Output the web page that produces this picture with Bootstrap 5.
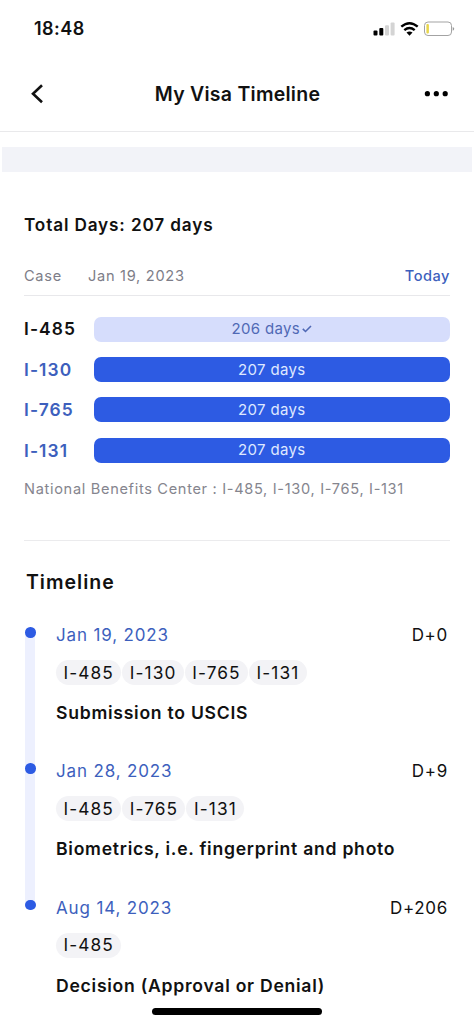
<!DOCTYPE html>
<html lang="en">
<head>
<meta charset="utf-8">
<meta name="viewport" content="width=device-width, initial-scale=1">
<title>My Visa Timeline</title>
<link href="https://cdn.jsdelivr.net/npm/bootstrap@5.3.0/dist/css/bootstrap.min.css" rel="stylesheet">
<style>
body{font-family:Inter,"Liberation Sans",sans-serif;color:#111;background:#fff;font-size:17px}
.screen{width:474px;height:1025px;overflow:hidden}
.status{height:57px;padding:0 19px 0 34px}
.clock{font-size:18px;font-weight:600;letter-spacing:.45px}
.topbar{height:75px;padding:0 25px 0 30px;border-bottom:1px solid #e9e9eb}
.heading{font-size:19.5px;font-weight:600;letter-spacing:.25px;padding:1px 0 0 7px}
.band{height:25px;margin:15px 2px 0;background:#f2f3f8}
.summary{margin:0 24px;border-bottom:1px solid #ebebed;height:369px;padding-top:40px}
.total{font-size:17.2px;font-weight:600;letter-spacing:.85px;line-height:26px}
.legend{height:45px;padding-top:12px;border-bottom:1px solid #e8e8eb;margin-top:13px;font-size:14.6px;line-height:26px;letter-spacing:.7px;color:#7d7d88}
.legend-case{width:64px}
.blue{color:#3d5fbd}
.today{letter-spacing:.5px}
.bars{margin-top:20.5px;gap:15.4px}
.case-row{height:25px}
.case-id{width:69.5px;font-size:17.4px;font-weight:600;letter-spacing:1.1px;padding-top:1px}
.bar{border-radius:7px;background:#2d5be3;color:#dfe8ff;font-size:15px;letter-spacing:.35px;padding-top:1px}
.bar-done{background:#d6ddfc;color:#5069b5}
.check{margin-left:2px}
.note{font-size:14.6px;letter-spacing:.67px;color:#85858e;line-height:24px;margin-top:14px}
.section-title{font-size:19.5px;font-weight:600;letter-spacing:1px;line-height:28px;margin:27px 26px 0}
.events{margin:26px 26px 0 25px}
.event{height:136.4px}
.rail{width:31px}
.rail::after{content:"";position:absolute;left:0;top:10px;width:10px;height:100%;background:#edf0fe}
.event:last-child .rail::after{display:none}
.dot{position:absolute;z-index:1;left:0;top:5px;width:10.5px;height:10.5px;border-radius:50%;background:#2d5be3}
.when{line-height:26px;letter-spacing:.85px}
.elapsed{letter-spacing:.7px}
.chips{margin-top:12px;gap:1px}
.chip{height:25px;border-radius:13px;background:#f3f3f6;padding:0 7.3px 0 7.5px;font-size:17.3px;letter-spacing:1.1px}
.what{font-size:17.6px;font-weight:600;letter-spacing:.73px;line-height:26px;margin-top:15px}
.home{position:absolute;left:152px;top:1008px;width:170px;height:7px;border-radius:4px;background:#000}
</style>
</head>
<body>
<main class="screen position-relative">
  <div class="status d-flex align-items-center justify-content-between">
    <span class="clock">18:48</span>
    <svg width="82" height="20" viewBox="0 0 82 20">
      <rect x="0.5" y="11.500" width="4" height="5" rx="1"/><rect x="6.300" y="9" width="4" height="7.500" rx="1"/>
      <rect x="12" y="6.300" width="4" height="10.200" rx="1" fill="#d4d4d4"/><rect x="17.600" y="3.500" width="4" height="13" rx="1" fill="#d4d4d4"/>
      <g fill="none" stroke="#000" stroke-width="2.400"><path d="M28.300 7.700q8.200-7 16.400 0"/><path d="M31.300 11.200q5.200-4.300 10.400 0"/></g>
      <path d="M33.500 13.600q3-2.400 6 0L36.500 16.700z"/>
      <rect x="51.500" y="3" width="27" height="13.500" rx="3.500" fill="#fff" stroke="#a3a3a3"/>
      <rect x="53.400" y="5" width="2.500" height="9.500" rx="1" fill="#e8d64c"/><path d="M79.700 8v3.700q1.500-.5 1.500-1.850T79.700 8" fill="#999"/>
    </svg>
  </div>
  <header class="topbar d-flex align-items-center justify-content-between">
    <svg width="14" height="20" viewBox="0 0 14 20" fill="none" stroke="#111" stroke-width="2.600"><path d="M12 1.300 3 9.800l9 8.500"/></svg>
    <h1 class="heading m-0">My Visa Timeline</h1>
    <svg width="25" height="8" viewBox="0 0 25 8"><circle cx="3.400" cy="3.700" r="2.600"/><circle cx="12.300" cy="3.700" r="2.600"/><circle cx="21.200" cy="3.700" r="2.600"/></svg>
  </header>
  <div class="band"></div>
  <section class="summary">
    <h2 class="total m-0">Total Days: 207 days</h2>
    <div class="legend d-flex"><span class="legend-case">Case</span><span>Jan 19, 2023</span><span class="blue fw-medium ms-auto today">Today</span></div>
    <div class="bars d-flex flex-column">
      <div class="case-row d-flex align-items-center"><span class="case-id">I-485</span><div class="bar bar-done h-100 flex-grow-1 d-flex align-items-center justify-content-center">206 days<svg class="check" width="10" height="9" viewBox="0 0 10 9" fill="none" stroke="currentColor" stroke-width="1.600"><path d="M.8 3.900 3.500 6.500 9 1"/></svg></div></div>
      <div class="case-row d-flex align-items-center"><span class="case-id blue">I-130</span><div class="bar h-100 flex-grow-1 d-flex align-items-center justify-content-center">207 days</div></div>
      <div class="case-row d-flex align-items-center"><span class="case-id blue">I-765</span><div class="bar h-100 flex-grow-1 d-flex align-items-center justify-content-center">207 days</div></div>
      <div class="case-row d-flex align-items-center"><span class="case-id blue">I-131</span><div class="bar h-100 flex-grow-1 d-flex align-items-center justify-content-center">207 days</div></div>
    </div>
    <p class="note mb-0">National Benefits Center : I-485, I-130, I-765, I-131</p>
  </section>
  <h2 class="section-title">Timeline</h2>
  <div class="events">
    <div class="event d-flex">
      <div class="rail position-relative flex-shrink-0"><span class="dot"></span></div>
      <div class="flex-grow-1">
        <div class="when d-flex justify-content-between"><span class="blue">Jan 19, 2023</span><span class="elapsed">D+0</span></div>
        <div class="chips d-flex"><span class="chip d-flex align-items-center">I-485</span><span class="chip d-flex align-items-center">I-130</span><span class="chip d-flex align-items-center">I-765</span><span class="chip d-flex align-items-center">I-131</span></div>
        <div class="what">Submission to USCIS</div>
      </div>
    </div>
    <div class="event d-flex">
      <div class="rail position-relative flex-shrink-0"><span class="dot"></span></div>
      <div class="flex-grow-1">
        <div class="when d-flex justify-content-between"><span class="blue">Jan 28, 2023</span><span class="elapsed">D+9</span></div>
        <div class="chips d-flex"><span class="chip d-flex align-items-center">I-485</span><span class="chip d-flex align-items-center">I-765</span><span class="chip d-flex align-items-center">I-131</span></div>
        <div class="what">Biometrics, i.e. fingerprint and photo</div>
      </div>
    </div>
    <div class="event d-flex">
      <div class="rail position-relative flex-shrink-0"><span class="dot"></span></div>
      <div class="flex-grow-1">
        <div class="when d-flex justify-content-between"><span class="blue">Aug 14, 2023</span><span class="elapsed">D+206</span></div>
        <div class="chips d-flex"><span class="chip d-flex align-items-center">I-485</span></div>
        <div class="what">Decision (Approval or Denial)</div>
      </div>
    </div>
  </div>
  <div class="home"></div>
</main>
<script src="https://cdn.jsdelivr.net/npm/bootstrap@5.3.0/dist/js/bootstrap.bundle.min.js"></script>
</body>
</html>
